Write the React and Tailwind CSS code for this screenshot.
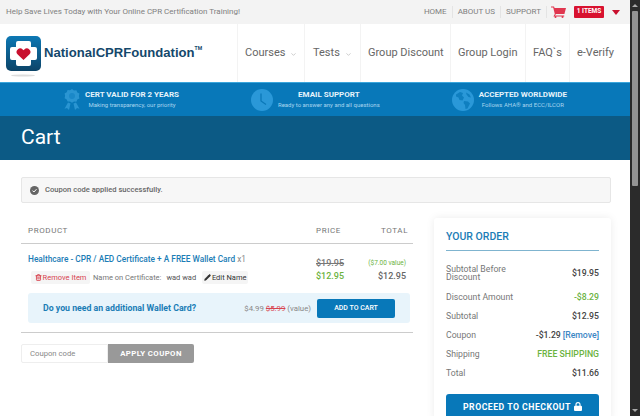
import React from 'react';
import { Trash2, Pencil, ChevronDown } from 'lucide-react';

const navItems = [
  { label: 'Courses', caret: true, w: 'w-[67px]' },
  { label: 'Tests', caret: true, w: 'w-[56px] pl-[8px]' },
  { label: 'Group Discount', w: 'w-[90px]' },
  { label: 'Group Login', w: 'w-[75px]' },
  { label: 'FAQ`s', w: 'w-[44px]' },
  { label: 'e-Verify', w: 'w-[51px]' },
];

const orderRows = [
  { label: 'Subtotal Before Discount', value: '$19.95', cls: 'text-[#444]', h: 'h-[29px]' },
  { label: 'Discount Amount', value: '-$8.29', cls: 'text-[#6cb33f]', h: 'h-[19px]' },
  { label: 'Subtotal', value: '$12.95', cls: 'text-[#444]', h: 'h-[19px]' },
  { label: 'Coupon', value: '-$1.29', extra: '[Remove]', cls: 'text-[#444]', h: 'h-[19px]' },
  { label: 'Shipping', value: 'FREE SHIPPING', cls: 'text-[#6cb33f]', h: 'h-[19px]' },
  { label: 'Total', value: '$11.66', cls: 'text-[#444]', h: 'h-[19px]' },
];

const Logo = () => (
  <svg width="35" height="35" viewBox="0 0 35 35" className="overflow-visible">
    <defs>
      <linearGradient id="logoBg" x1="0" y1="0" x2="0" y2="1">
        <stop offset="0" stopColor="#0d78b4" />
        <stop offset="1" stopColor="#0c4468" />
      </linearGradient>
    </defs>
    <rect width="35" height="35" rx="5" fill="url(#logoBg)" />
    <path d="M12 5h11a2 2 0 0 1 2 2v4h4a2 2 0 0 1 2 2v9a2 2 0 0 1-2 2h-4v4a2 2 0 0 1-2 2H12a2 2 0 0 1-2-2v-4H6a2 2 0 0 1-2-2v-9a2 2 0 0 1 2-2h4V7a2 2 0 0 1 2-2z" fill="#fff" />
    <path d="M17.5 24l-5.8-5.6a3.4 3.4 0 0 1 0-4.9 3.6 3.6 0 0 1 5 0l.8.8.8-.8a3.6 3.6 0 0 1 5 0 3.4 3.4 0 0 1 0 4.9z" fill="#c8102e" />
    <ellipse cx="17" cy="39.500" rx="12" ry="1" fill="#ddd" />
  </svg>
);

const CartIcon = () => (
  <svg width="15" height="12" viewBox="0 0 15 12" className="ml-[4px]">
    <path d="M0 .5h3l.6 1.5H15l-1.6 6H5L3.8 9.5h9.4v1H2.4L3.8 8 2.2 1.5H0z" fill="#e0364f" />
    <circle cx="4.5" cy="11" r="1" fill="#e0364f" />
    <circle cx="11.5" cy="11" r="1" fill="#e0364f" />
  </svg>
);

const RibbonIcon = () => (
  <svg width="16" height="21" viewBox="0 0 16 21" fill="#2a95d2">
    <path d="M8 0l2 1.4 2.4-.2.9 2.2 2.1 1.2-.5 2.4.5 2.4-2.1 1.2-.9 2.2-2.4-.2L8 13.800l-2-1.400-2.400.2-.9-2.200L.6 9.200l.5-2.400-.5-2.400 2.100-1.200.9-2.200 2.400.2z" />
    <path d="M4 13.500l2.500 1L5 21l-2-2-2.500.8zM12 13.500l-2.500 1L11 21l2-2 2.500.8z" />
    <circle cx="8" cy="6.900" r="3" fill="#1a88c8" />
  </svg>
);

const ClockIcon = () => (
  <svg width="22" height="22" viewBox="0 0 22 22">
    <circle cx="11" cy="11" r="11" fill="#2a98d8" />
    <path d="M10 4.500V12l5 3.500" fill="none" stroke="#0b78b8" strokeWidth="1.300" />
  </svg>
);

const GlobeIcon = () => (
  <svg width="22" height="22" viewBox="0 0 22 22">
    <circle cx="11" cy="11" r="11" fill="#2a98d8" />
    <path d="M4 5.500l4-2.500 3 1-1 2.500 2 2-1.500 3-3-.5-1-2.500-2.500-1zM12 12l4 .5 2 2-2.500 5-2 .5-.5-4-1.500-2zM14 3.500l3.500 2 1.500 3-2.500-.5-2-2.500z" fill="#0f7fc0" />
  </svg>
);

const LockIcon = () => (
  <svg width="8" height="9" viewBox="0 0 8 9" className="ml-[3px] mb-[1px]">
    <path d="M2 4V2.600a2 2 0 0 1 4 0V4" fill="none" stroke="#fff" strokeWidth="1.100" />
    <rect y="3.800" width="8" height="5.200" rx="1" fill="#fff" />
  </svg>
);

const perks = [
  { icon: RibbonIcon, title: 'CERT VALID FOR 2 YEARS', sub: 'Making transparency, our priority' },
  { icon: ClockIcon, title: 'EMAIL SUPPORT', sub: 'Ready to answer any and all questions' },
  { icon: GlobeIcon, title: 'ACCEPTED WORLDWIDE', sub: 'Follows AHA® and ECC/ILCOR' },
];

const App = () => {
  return (
    <div className="flex h-[416px] w-[640px] overflow-hidden bg-white font-['Roboto',sans-serif]">
      <div className="w-[630px] shrink-0">
        {/* Top bar */}
        <div className="flex h-[24px] items-center justify-between bg-[#f3f3f3] pl-[6px] pr-[10px] text-[#808080]">
          <span className="text-[8px]">Help Save Lives Today with Your Online CPR Certification Training!</span>
          <div className="flex items-center text-[8px]">
            <span className="border-r border-[#e4e4e4] pr-[5px]">HOME</span>
            <span className="border-r border-[#e4e4e4] px-[5px]">ABOUT US</span>
            <span className="border-r border-[#e4e4e4] px-[5px]">SUPPORT</span>
            <CartIcon />
            <span className="ml-[8px] flex h-[12px] w-[30px] items-center justify-center rounded-[1px] bg-[#d8112f] text-[6.500px] font-bold text-white">1 ITEMS</span>
            <span className="ml-[8px] h-0 w-0 border-x-[4px] border-t-[5px] border-x-transparent border-t-[#c8102e]" />
          </div>
        </div>

        {/* Main nav */}
        <div className="flex h-[58px] items-stretch justify-between pl-[6px] pr-[10px]">
          <div className="flex items-center">
            <Logo />
            <span className="ml-[3px] font-['Liberation_Sans',sans-serif] text-[13.100px] font-bold text-[#14486b]">NationalCPRFoundation</span>
            <span className="mb-[8px] text-[5px] font-bold text-[#14486b]">TM</span>
          </div>
          <div className="flex items-stretch">
            {navItems.map((item) => (
              <div key={item.label} className={`flex items-center border-l border-[#f3f3f3] pl-[7px] text-[11px] text-[#666] ${item.w}`}>
                {item.label}
                {item.caret && <ChevronDown className="ml-[5px] mt-[3px] h-[7px] w-[7px] text-[#aaa]" />}
              </div>
            ))}
          </div>
        </div>

        {/* Perks band */}
        <div className="flex h-[34px] items-center justify-between border-t border-[#3aa6dc] bg-[#0878b9] pl-[64px] pr-[63px]">
          {perks.map((perk) => (
            <div key={perk.title} className="flex items-center gap-[5px]">
              <perk.icon />
              <div className="mb-[2px] text-center">
                <div className="text-[8px] font-bold leading-[11px] text-[#e5f3fb]">{perk.title}</div>
                <div className="text-[6px] leading-[9px] text-[#a9d6ef]">{perk.sub}</div>
              </div>
            </div>
          ))}
        </div>

        {/* Page title */}
        <div className="flex h-[44px] items-center bg-[#0c5a85] pl-[21px]">
          <h1 className="text-[21px] text-white">Cart</h1>
        </div>

        <div className="pl-[21px] pr-[19px] pt-[17px]">
          {/* Notice */}
          <div className="flex h-[26px] items-center rounded-[2px] border border-[#e6e6e6] bg-[#f7f7f7] pl-[8px] text-[7.600px] font-medium text-[#666]">
            <svg width="9" height="9" viewBox="0 0 9 9" className="mr-[6px]">
              <circle cx="4.500" cy="4.500" r="4.500" fill="#666" />
              <path d="M2.500 4.600l1.400 1.400 2.600-2.800" fill="none" stroke="#fff" strokeWidth="1" />
            </svg>
            Coupon code applied successfully.
          </div>

          <div className="mt-[15px] flex items-start justify-between">
            {/* Cart table */}
            <div className="w-[392px]">
              <div className="flex h-[26px] items-center justify-between border-b border-[#ccc] pl-[7px] pr-[7px] text-[8px] tracking-[0.6px] text-[#777]">
                <span>PRODUCT</span>
                <div className="flex">
                  <span className="w-[65px]">PRICE</span>
                  <span className="w-[25px] text-right">TOTAL</span>
                </div>
              </div>

              <div className="flex justify-between pl-[7px] pr-[7px] pt-[9px]">
                <div>
                  <div className="text-[8.300px] font-medium text-[#1b7db6]">
                    Healthcare - CPR / AED Certificate + A FREE Wallet Card <span className="font-normal text-[#888]">x1</span>
                  </div>
                  <div className="mt-[6px] flex items-center pl-[3px] text-[7.500px] text-[#777]">
                    <span className="flex h-[13px] w-[59px] items-center justify-center rounded-[2px] bg-[#f5f5f5] text-[#d8444f]">
                      <Trash2 className="mr-[1px] h-[7px] w-[7px]" strokeWidth={3} />
                      Remove Item
                    </span>
                    <span className="ml-[3px]">Name on Certificate:</span>
                    <span className="ml-[5px] text-[#555]">wad wad</span>
                    <span className="ml-[6px] flex h-[13px] w-[46px] items-center justify-center rounded-[2px] bg-[#f5f5f5] text-[#333]">
                      <Pencil className="mr-[1px] h-[7px] w-[7px] fill-[#333]" />
                      Edit Name
                    </span>
                  </div>
                </div>
                <div className="flex pt-[4px]">
                  <div className="w-[52px] text-[9px] font-medium leading-[12.500px]">
                    <div className="text-[#777] line-through">$19.95</div>
                    <div className="text-[#6cb33f]">$12.95</div>
                  </div>
                  <div className="w-[38px] text-right">
                    <div className="text-[6.500px] leading-[12.500px] text-[#6cb33f]">($7.00 value)</div>
                    <div className="text-[9px] font-medium leading-[12.500px] text-[#666]">$12.95</div>
                  </div>
                </div>
              </div>

              {/* Wallet card upsell */}
              <div className="ml-[7px] mr-[3px] mt-[9px] flex h-[30px] items-center justify-between rounded-[3px] bg-[#e8f4fb] pl-[15px] pr-[15px]">
                <span className="text-[8.750px] font-bold text-[#1b7db6]">Do you need an additional Wallet Card?</span>
                <div className="flex items-center">
                  <span className="mr-[6px] text-[7.800px] text-[#888]">
                    $4.99 <span className="text-[#d8444f] line-through">$5.99</span> (value)
                  </span>
                  <button className="h-[19px] w-[78px] rounded-[2px] bg-[#0878b9] text-[7px] font-medium text-white">ADD TO CART</button>
                </div>
              </div>
              <div className="mt-[9px] border-b border-[#ccc]" />

              {/* Coupon */}
              <div className="mt-[11px] flex h-[19px] w-[173px]">
                <div className="flex w-[87px] items-center rounded-l-[2px] border border-[#eee] pl-[8px] text-[7.700px] text-[#888]">Coupon code</div>
                <button className="flex-1 rounded-r-[2px] bg-[#999] text-[7.800px] font-bold tracking-[0.4px] text-white">APPLY COUPON</button>
              </div>
            </div>

            {/* Order summary */}
            <div className="w-[177px] rounded-[3px] px-[12px] pt-[11px] shadow-[0_0_8px_rgba(0,0,0,0.08)]">
              <div className="border-b border-[#7fb4cf] pb-[5px] text-[10.500px] font-medium text-[#1b7db6]">YOUR ORDER</div>
              <div className="pt-[8px]">
                {orderRows.map((row) => (
                  <div key={row.label} className={`flex items-center justify-between text-[8.700px] ${row.h}`}>
                    <span className="w-[80px] leading-[8.600px] text-[#777]">{row.label}</span>
                    <span className={`font-medium ${row.cls}`}>
                      {row.value}
                      {row.extra && <span className="ml-[2px] text-[#3b86c4]">{row.extra}</span>}
                    </span>
                  </div>
                ))}
              </div>
              <button className="mt-[11px] flex h-[27px] w-full items-center justify-center rounded-t-[3px] bg-[#0878b9] text-[8.700px] font-bold tracking-[0.5px] text-white">
                PROCEED TO CHECKOUT
                <LockIcon />
              </button>
            </div>
          </div>
        </div>
      </div>

      {/* Browser scrollbar */}
      <div className="flex w-[10px] flex-col items-center bg-[#2b2b2b]">
        <span className="mb-[4px] mt-[4px] h-0 w-0 border-x-[3px] border-b-[3px] border-x-transparent border-b-[#aaa]" />
        <div className="h-[175px] w-[6px] rounded-[1px] bg-[#949494]" />
        <span className="mb-[4px] mt-auto h-0 w-0 border-x-[3px] border-t-[3px] border-x-transparent border-t-[#aaa]" />
      </div>
    </div>
  );
};

export default App;
